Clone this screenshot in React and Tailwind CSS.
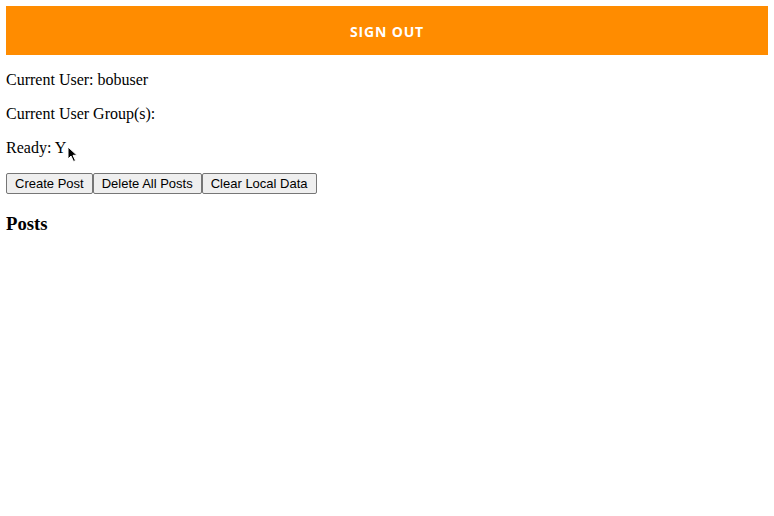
import React from 'react';

const btn =
  "h-[21px] px-[8px] bg-[#efefef] border border-[#767676] rounded-[2px] text-[13px] text-black leading-none [font-family:'Liberation_Sans',Arial,sans-serif]";

const App = () => {
  return (
    <div className="relative min-h-[516px] bg-white p-[6px] text-black [font-family:'Liberation_Serif','Times_New_Roman',serif]">
      {/* SIGN OUT BAR */}
      <button className="w-full h-[49px] pt-[2px] bg-[#ff8c00] text-white text-[14px] font-bold tracking-[0.06em] uppercase [font-family:'Open_Sans','Noto_Sans',sans-serif]">
        Sign Out
      </button>

      <p className="mt-[16px] text-[16px] leading-[18px]">Current User: bobuser</p>
      <p className="mt-[16px] text-[16px] leading-[18px]">Current User Group(s):</p>
      <p className="mt-[16px] text-[16px] leading-[18px]">Ready: Y</p>

      <div className="mt-[16px] flex">
        <button className={btn}>Create Post</button>
        <button className={btn}>Delete All Posts</button>
        <button className={btn}>Clear Local Data</button>
      </div>

      <h3 className="mt-[19px] text-[18.7px] leading-[22px] font-bold">Posts</h3>

      {/* mouse cursor */}
      <svg className="absolute left-[67px] top-[146px]" width="11" height="17" viewBox="0 0 11 17">
        <path d="M1 1 L1 13 L4 10 L6.5 15.5 L8.5 14.6 L6 9.3 L10 9.3 Z" fill="black" stroke="white" strokeWidth="1" />
      </svg>
    </div>
  );
};

export default App;
